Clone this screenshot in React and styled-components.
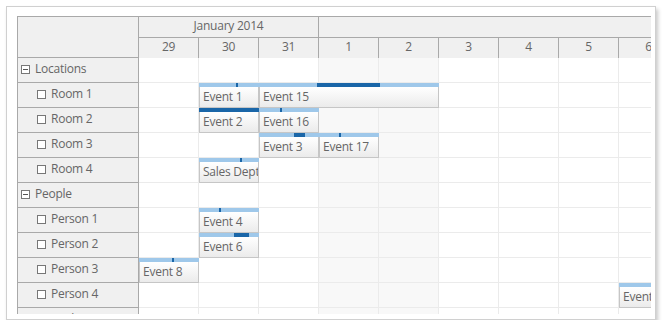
import React from 'react';
import styled, { createGlobalStyle } from 'styled-components';

const CELL = 60;

const days = ['29', '30', '31', '1', '2', '3', '4', '5', '6', '7'];
const shaded = [3, 4];

const rows = [
  { name: 'Locations', group: true, events: [] },
  {
    name: 'Room 1',
    events: [
      { text: 'Event 1', start: 1, span: 1, from: 37, width: 2 },
      { text: 'Event 15', start: 2, span: 3, from: 58, width: 63 },
    ],
  },
  {
    name: 'Room 2',
    events: [
      { text: 'Event 2', start: 1, span: 1, from: 0, width: 60 },
      { text: 'Event 16', start: 2, span: 1, from: 21, width: 2 },
    ],
  },
  {
    name: 'Room 3',
    events: [
      { text: 'Event 3', start: 2, span: 1, from: 35, width: 11 },
      { text: 'Event 17', start: 3, span: 1, from: 20, width: 2 },
    ],
  },
  { name: 'Room 4', events: [{ text: 'Sales Dept', start: 1, span: 1, from: 41, width: 2 }] },
  { name: 'People', group: true, events: [] },
  { name: 'Person 1', events: [{ text: 'Event 4', start: 1, span: 1, from: 20, width: 2 }] },
  { name: 'Person 2', events: [{ text: 'Event 6', start: 1, span: 1, from: 35, width: 15 }] },
  { name: 'Person 3', events: [{ text: 'Event 8', start: 0, span: 1, from: 33, width: 2 }] },
  { name: 'Person 4', events: [{ text: 'Event 9', start: 8, span: 1, from: 0, width: 0 }] },
  { name: 'Tools', events: [] },
];

const GlobalStyle = createGlobalStyle`
  html, body {
    margin: 0;
    padding: 0;
    background: #fff;
  }
  body {
    font-family: "Open Sans", "Liberation Sans", sans-serif;
    font-size: 12px;
    letter-spacing: -0.25px;
    color: #666;
  }
`;

const Frame = styled.div`
  margin: 6px 0 0 6px;
  width: 650px;
  height: 314px;
  box-sizing: border-box;
  border: 1px solid #d0d0d0;
  box-shadow: 2px 3px 4px rgba(0, 0, 0, 0.22);
  padding: 9px 4px 5px 10px;
  background: #fff;
`;

const Scheduler = styled.div`
  display: grid;
  grid-template-columns: 122px 1fr;
  grid-template-rows: 42px 1fr;
  height: 100%;
  overflow: hidden;
`;

const Corner = styled.div`
  box-sizing: border-box;
  border: 1px solid #a9a9a9;
  background: #f0f0f0;
`;

const TimeHeader = styled.div`
  display: flex;
  flex-direction: column;
  overflow: hidden;
  background: #f0f0f0;
  border-top: 1px solid #a9a9a9;
`;

const HeaderLine = styled.div`
  display: flex;
  height: ${p => p.height}px;
  box-sizing: border-box;
  border-bottom: 1px solid #a9a9a9;
`;

const HeaderCell = styled.div`
  flex: 0 0 ${p => p.width}px;
  box-sizing: border-box;
  border-right: 1px solid #a9a9a9;
  display: flex;
  align-items: center;
  justify-content: center;
  padding-bottom: 3px;
  color: #666;
  font-size: 12px;
  white-space: nowrap;
`;

const RowHeaders = styled.div`
  box-sizing: border-box;
  border-left: 1px solid #a9a9a9;
  border-right: 1px solid #a9a9a9;
  background: #f0f0f0;
  overflow: hidden;
`;

const RowHeader = styled.div`
  height: 25px;
  box-sizing: border-box;
  border-bottom: 1px solid #a9a9a9;
  display: flex;
  align-items: center;
  gap: 5px;
  padding-left: ${p => (p.$group ? 3 : 19)}px;
  padding-bottom: 4px;
  color: #666;
  font-size: 12px;
  white-space: nowrap;
`;

const Toggle = styled.span`
  position: relative;
  top: 1px;
  width: 9px;
  height: 9px;
  box-sizing: border-box;
  border: 1px solid #777;
  background: #fff;
  flex: none;

  &::after {
    content: '';
    display: ${p => (p.$group ? 'block' : 'none')};
    position: absolute;
    left: 1px;
    right: 1px;
    top: 3px;
    height: 1px;
    background: #555;
  }
`;

const Body = styled.div`
  overflow: hidden;
`;

const Row = styled.div`
  position: relative;
  display: flex;
  height: 25px;
  box-sizing: border-box;
  border-bottom: 1px solid #ebebeb;
`;

const Cell = styled.div`
  flex: 0 0 ${CELL}px;
  box-sizing: border-box;
  border-right: 1px solid #ebebeb;
  background: ${p => (p.$shaded ? '#f8f8f8' : '#fff')};
`;

const Event = styled.div`
  position: absolute;
  top: 0;
  height: 25px;
  display: flex;
  flex-direction: column;
  z-index: 1;
`;

const Bar = styled.div`
  position: relative;
  height: 4px;
  flex: none;
  background: #9fc8ea;
`;

const Done = styled.div`
  position: absolute;
  top: 0;
  bottom: 0;
  background: #1a66a8;
`;

const EventBody = styled.div`
  flex: 1;
  box-sizing: border-box;
  border: 1px solid #c6c6c6;
  border-top: none;
  background: linear-gradient(#ffffff, #ebebeb);
  display: flex;
  align-items: center;
  padding: 0 0 1px 3px;
  overflow: hidden;
  white-space: nowrap;
  color: #666;
  font-size: 12px;
`;

export default function App() {
  return (
    <>
      <GlobalStyle />
      <Frame>
        <Scheduler>
          <Corner />
          <TimeHeader>
            <HeaderLine height={21}>
              <HeaderCell width={CELL * 3}>January 2014</HeaderCell>
              <HeaderCell width={CELL * 7} />
            </HeaderLine>
            <HeaderLine height={21}>
              {days.map(d => (
                <HeaderCell key={d} width={CELL}>{d}</HeaderCell>
              ))}
            </HeaderLine>
          </TimeHeader>
          <RowHeaders>
            {rows.map(r => (
              <RowHeader key={r.name} $group={r.group}>
                <Toggle $group={r.group} />
                {r.name}
              </RowHeader>
            ))}
          </RowHeaders>
          <Body>
            {rows.map(r => (
              <Row key={r.name}>
                {days.map((d, i) => (
                  <Cell key={d} $shaded={shaded.includes(i)} />
                ))}
                {r.events.map(e => (
                  <Event
                    key={e.text}
                    style={{ left: e.start * CELL, width: e.span * CELL }}
                  >
                    <Bar>
                      <Done style={{ left: e.from, width: e.width }} />
                    </Bar>
                    <EventBody>{e.text}</EventBody>
                  </Event>
                ))}
              </Row>
            ))}
          </Body>
        </Scheduler>
      </Frame>
    </>
  );
}
